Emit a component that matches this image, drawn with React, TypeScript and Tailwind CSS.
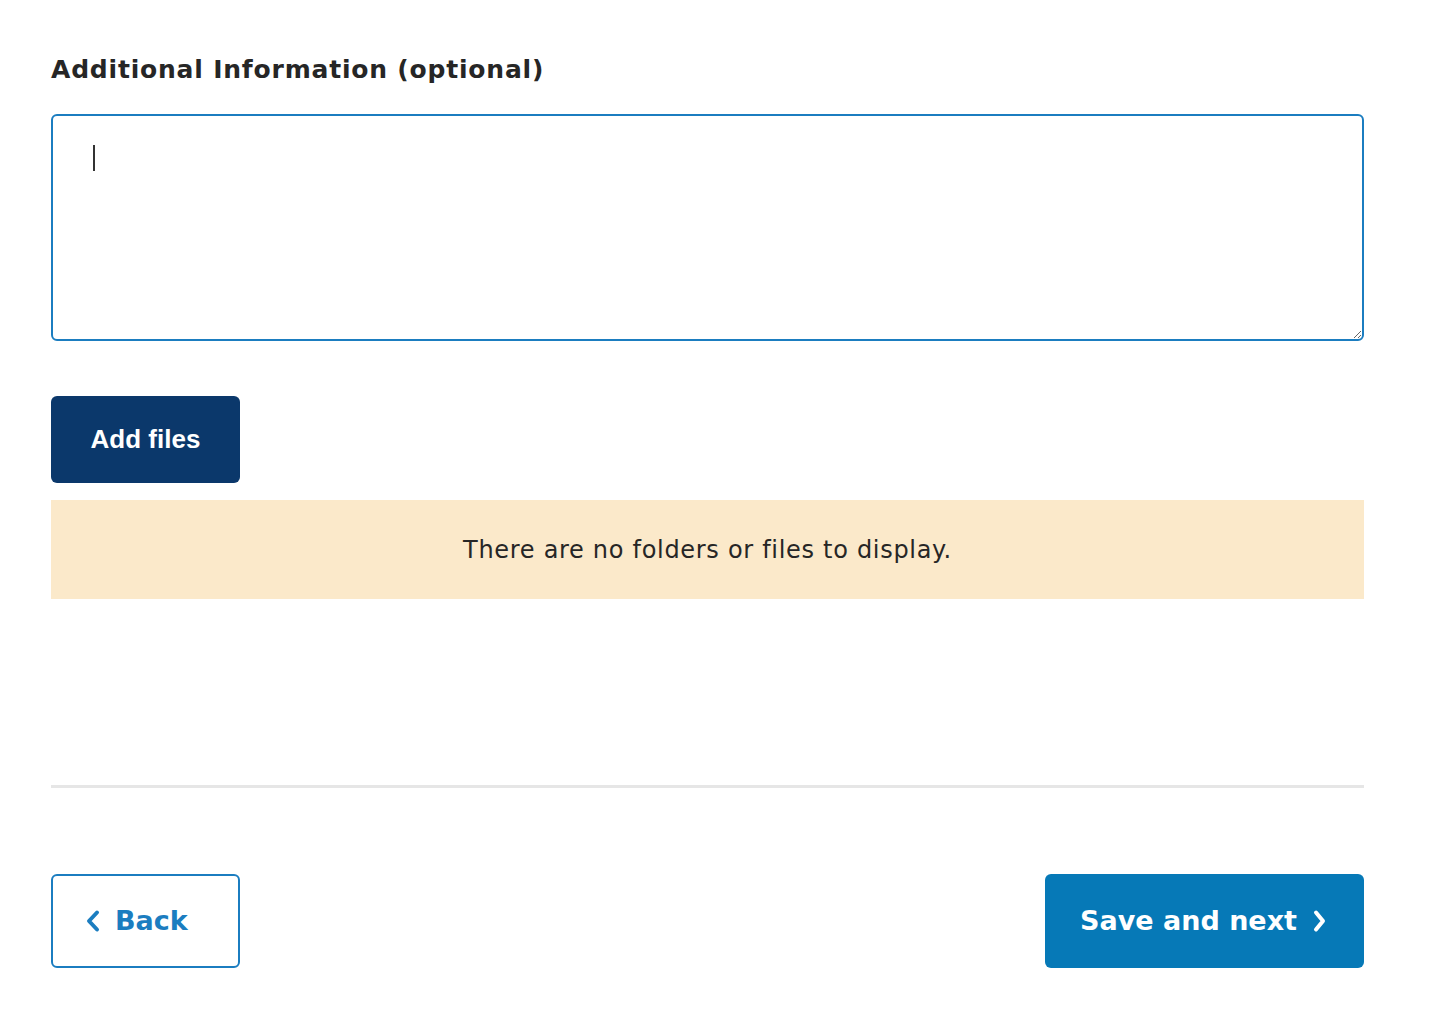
import React from "react";

export default function App() {
  return (
    <div className="min-h-[1021px] w-[1440px] bg-white" style={{ fontFamily: "'DejaVu Sans', Inter, sans-serif" }}>
      <div className="w-[1313px] ml-[51px] pt-[53px]">
        <label className="block text-[25px] leading-[34px] font-bold text-[#262626] tracking-[0.8px]">
          Additional Information (optional)
        </label>
        <div className="mt-[27px] relative">
          <textarea
            className="block w-full h-[227px] border-2 border-[#1b7dc0] rounded-[6px] outline-none resize-y px-[40px] py-[28px] text-[24px] text-[#222]"
            defaultValue=""
          />
          <div className="absolute left-[42px] top-[31px] w-[2px] h-[26px] bg-[#333]" />
        </div>
        <button
          className="mt-[55px] w-[189px] h-[87px] rounded-[6px] bg-[#0b386b] text-white text-[26px] font-bold"
          style={{ fontFamily: "'Liberation Sans', Arial, sans-serif" }}
        >
          Add files
        </button>
        <div className="mt-[17px] h-[99px] bg-[#fbe9ca] flex items-center justify-center text-[24px] tracking-[0.7px] text-[#262626]">
          There are no folders or files to display.
        </div>
        <div className="mt-[186px] h-[3px] bg-[#e6e6e6]" />
        <div className="mt-[86px] flex justify-between">
          <button className="w-[189px] h-[94px] rounded-[6px] border-2 border-[#1b7dc0] bg-white text-[#1b7dc0] text-[27px] font-bold flex items-center justify-start pl-[31px] gap-[13px]">
            <svg width="18" height="24" viewBox="0 0 18 24" fill="none">
              <path d="M13 3.5 L5 12 L13 20.5" stroke="#1b7dc0" strokeWidth="4" strokeLinecap="round" strokeLinejoin="round" />
            </svg>
            Back
          </button>
          <button className="w-[319px] h-[94px] rounded-[6px] bg-[#0679b7] text-white text-[27px] font-bold flex items-center justify-center gap-[14px]">
            Save and next
            <svg width="18" height="24" viewBox="0 0 18 24" fill="none">
              <path d="M5 3.5 L12 12 L5 20.5" stroke="white" strokeWidth="4" strokeLinecap="round" strokeLinejoin="round" />
            </svg>
          </button>
        </div>
      </div>
    </div>
  );
}
